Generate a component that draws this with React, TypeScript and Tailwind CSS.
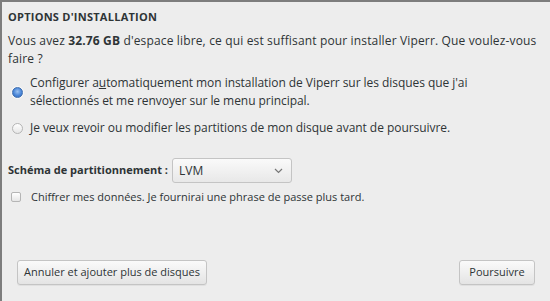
import React from "react"

function Radio({ checked }: { checked?: boolean }) {
  return checked ? (
    <span className="w-[11px] h-[11px] rounded-full shrink-0 border border-[#3f6fb0] bg-[radial-gradient(circle_at_50%_40%,#9cc2f0_0%,#4a86d8_55%,#2f66b8_100%)] shadow-[0_0_0_1px_rgba(255,255,255,0.6)]" />
  ) : (
    <span className="w-[11px] h-[11px] rounded-full shrink-0 border border-[#b5b5b5] bg-gradient-to-b from-[#ffffff] to-[#e6e6e6]" />
  )
}

export default function App() {
  return (
    <div className="w-[550px] h-[301px] bg-[#ededed] border-t-2 border-l-2 border-[#7d7d7d] font-['Open_Sans',sans-serif] text-[12px] text-[#2e3436] flex flex-col">
      <div className="px-[6px] pt-[8px] flex flex-col">
        <h1 className="font-bold text-[11px] leading-[14px] tracking-[0.25px]">OPTIONS D'INSTALLATION</h1>
        <p className="mt-[8px] leading-[18px] whitespace-nowrap tracking-[0.15px]">
          Vous avez <b className="font-bold">32.76 GB</b> d'espace libre, ce qui est suffisant pour installer Viperr. Que voulez-vous
          <br />
          faire ?
        </p>

        <div className="mt-[6px] flex items-center gap-[7px] pl-[4px]">
          <Radio checked />
          <p className="leading-[18px] whitespace-nowrap tracking-[-0.05px]">
            Configurer a<u>u</u>tomatiquement mon installation de Viperr sur les disques que j'ai
            <br />
            sélectionnés et me renvoyer sur le menu principal.
          </p>
        </div>

        <div className="mt-[9px] flex items-center gap-[7px] pl-[4px]">
          <Radio />
          <p className="leading-[18px] whitespace-nowrap tracking-[-0.05px]">
            Je veux revoir ou modifier les partitions de mon disque avant de poursuivre.
          </p>
        </div>

        <div className="mt-[21px] flex items-center gap-[4px]">
          <span className="font-bold text-[11px] whitespace-nowrap">Schéma de partitionnement :</span>
          <div className="w-[120px] h-[25px] rounded-[3px] border border-[#c4c4c4] bg-gradient-to-b from-[#fafafa] to-[#e8e8e8] flex items-center justify-between pl-[6px] pr-[8px]">
            <span>LVM</span>
            <svg width="9" height="6" viewBox="0 0 9 6" fill="none" stroke="#777" strokeWidth="1.2">
              <path d="M1 1l3.5 3.5L8 1" />
            </svg>
          </div>
        </div>

        <div className="mt-[6px] flex items-center gap-[10px] pl-[3px]">
          <span className="w-[10px] h-[10px] rounded-[2px] border border-[#b5b5b5] bg-gradient-to-b from-[#ffffff] to-[#e6e6e6] shrink-0" />
          <span className="text-[11px] whitespace-nowrap">Chiffrer mes données. Je fournirai une phrase de passe plus tard.</span>
        </div>
      </div>

      <div className="mt-auto mb-[16px] px-[15px] flex justify-between">
        <button className="h-[25px] w-[190px] rounded-[3px] border border-[#c4c4c4] bg-gradient-to-b from-[#fafafa] to-[#e4e4e4] shadow-[0_1px_0_rgba(0,0,0,0.05)] text-[11px] text-[#2e3436]">
          Annuler et ajouter plus de disques
        </button>
        <button className="h-[25px] w-[76px] rounded-[3px] border border-[#c4c4c4] bg-gradient-to-b from-[#fafafa] to-[#e4e4e4] shadow-[0_1px_0_rgba(0,0,0,0.05)] text-[11px] text-[#2e3436]">
          Poursuivre
        </button>
      </div>
    </div>
  )
}
